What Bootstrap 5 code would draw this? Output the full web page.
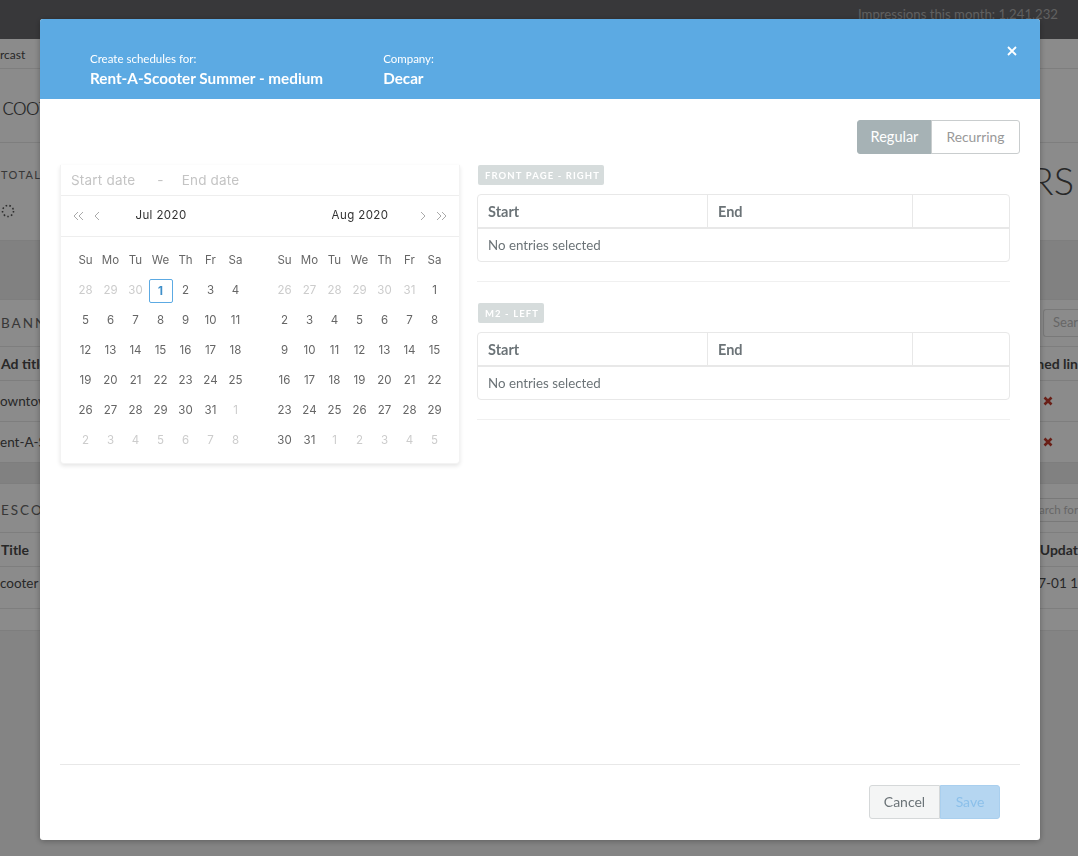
<!DOCTYPE html>
<html lang="en"><head><meta charset="utf-8"><title>Create schedules</title>
<link href="https://cdn.jsdelivr.net/npm/bootstrap@5.3.0/dist/css/bootstrap.min.css" rel="stylesheet">
<style>
html,body{height:856px;overflow:hidden}
body{background:#f0f0f0;font-family:Lato,"Noto Sans","Liberation Sans",sans-serif;color:#6b7377;font-size:14px}
.topbar{height:39px;background:#67676b;color:#b0b0b0;padding-right:20px;font-size:13.2px;padding-bottom:10px}
.bgr{background:#fdfdfd;border-bottom:1px solid #e6e6e6;color:#4a4a4a;font-size:13.5px;overflow:hidden;white-space:nowrap}
.bgr.alt{background:#ebebeb}
.h30{height:30px}.h74{height:74px}.h98{height:98px}.h59{height:59px}.h47{height:47px}.h34{height:34px}.h41{height:41px}.h21{height:21px}.h49{height:49px}.h42{height:42px}.h22{height:22px}
.crumb{font-size:12px;padding-top:2px}
.big{font-size:26px;font-weight:300;padding-left:2px;letter-spacing:-1.5px}
.bigr{font-size:38px;font-weight:300;line-height:1;padding-top:2px}
.caps{font-size:11px;letter-spacing:1.4px;color:#666;padding-left:1px}
.caps2{font-size:13.5px;letter-spacing:2px;color:#666;padding-left:1px}
.pad2{padding-top:4px}
.bold{font-weight:700;font-size:14px;padding-left:1px}
.ghost{color:#bbb;font-size:13px;border:1px solid #ddd;border-right:0;border-radius:3px 0 0 3px;padding:3px 0 3px 9px;width:35px}
.ghost2{color:#bbb;font-size:11.5px;border:1px solid #ddd;border-right:0;padding:2px 0 2px 2px;width:42px}
.chev{margin-left:-4px}
.spin{margin:20px 0 0 1px}
.up8{padding-bottom:8px}
.mr25{margin-right:25px}
.scrim{position:fixed;inset:0;background:rgba(0,0,0,.45)}
.dlg{position:fixed;left:40px;top:19px;width:1000px;height:821px;background:#fff;border:0;border-radius:3px;overflow:hidden;box-shadow:0 1px 6px rgba(0,0,0,.3)}
.dlg-head{height:80px;background:#5caae3;color:#fff;padding:32px 50px 0;position:relative;flex:none}
.lbl{font-size:11.5px;line-height:16px}
.val{font-size:15.25px;font-weight:700;line-height:22px}
.co{margin-left:60px}
.x{position:absolute;right:23px;top:27px}
.dlg-body{padding:21px 20px 0;height:665px}
.seg .btn{font-size:14.5px;height:34px;padding:0;color:#999;border-color:#c9cdce;line-height:32px;border-radius:3px;background:#fff}
.seg .btn.on{width:75px;background:#a6b2b5;color:#fff;border-color:#a6b2b5}
.seg .btn.off2{width:89px;font-size:13.8px}
.cols{margin-top:11px}
.cal{width:400px;height:299px;border-radius:0 0 4px 4px;box-shadow:0 2px 4px rgba(0,0,0,.1);border:1px solid #f3f3f3;border-top:0;font-family:Inter,"Liberation Sans",sans-serif;font-size:11.5px;color:#666}
.cal-in{height:31px;border-bottom:1px solid #eee;padding-left:10px;font-size:13.5px;color:#c4c4c4;letter-spacing:.2px}
.cal-in span:nth-child(2){margin:0 18px 0 22px}
.cal-nav{height:41px;border-bottom:1px solid #eee;color:#333;font-size:11.5px;letter-spacing:.4px}
.half{width:199px;padding:0 11px;position:relative}
.mlabel{position:absolute;left:0;right:0;text-align:center;margin-left:1px}
.mon{width:199.5px;padding:9px 12px 0}
.cal-grid{display:grid;grid-template-columns:repeat(7,25px);grid-auto-rows:30px;align-items:center;justify-items:center}
.off{color:#ccc}
.today{width:24px;height:24px;border:1px solid #5caae3;border-radius:2px;color:#3f8fc9;font-weight:700;text-align:center;line-height:22px}
.tag{background:#d6dcdc;color:#fff;font-size:9.5px;letter-spacing:1.1px;font-weight:700;height:20px;line-height:21px;padding:0 7px;border-radius:2px;display:block;margin-left:1px;white-space:nowrap}
.tag.t1{width:126px}
.tag.t2{width:66px}
.sched{width:533px;margin-right:10px}
.tbl{border:1px solid #e8e8e8;border-radius:4px;margin-top:9px;height:68px;font-size:13.3px}
.tbl-h{height:34px;border-bottom:2px solid #e8e8e8;font-weight:700;font-size:14.5px}
.tbl-c{padding:0 10px;line-height:33px}
.c1{width:230px;border-right:1px solid #e8e8e8}
.c2{width:205px;border-right:1px solid #e8e8e8}
.sep{height:1px;background:#f0f0f0;margin:19px 0 21px}
.foot{margin:0 20px;border-top:1px solid #e8e8e8;padding:20px 20px 0 0}
.foot .btn{height:34px;font-size:14px;padding:0;line-height:32px}
.bc{width:71px;background:#f4f5f5;border-color:#d5d8d9;color:#6b7377;border-radius:3px 0 0 3px}
.bs{width:60px;background:#b5d6f1;border-color:#a9cfee;color:#8cc0ea;border-radius:0 3px 3px 0}
</style></head><body>
<div class="topbar d-flex align-items-center justify-content-end">Impressions this month: 1,241,232</div>
<div class="bgr h30 d-flex align-items-center crumb"><span>rcast</span></div>
<div class="bgr h74 d-flex align-items-center big"><span>coot</span></div>
<div class="bgr h98 d-flex justify-content-between">
  <div class="d-flex flex-column pt-4"><span class="caps">TOTAL</span>
    <svg class="spin" width="14" height="14" viewBox="0 0 14 14"><circle cx="7" cy="7" r="5.5" fill="none" stroke="#555" stroke-width="1.6" stroke-dasharray="1.6 2.2"/></svg></div>
  <div class="d-flex flex-column pt-3 me-1"><span class="bigr">RS</span><svg class="mt-2 chev" width="8" height="10" viewBox="0 0 8 10"><path d="M6 1L2 5l4 4" fill="none" stroke="#666"/></svg></div>
</div>
<div class="bgr alt h59"></div>
<div class="bgr h47 d-flex justify-content-between align-items-center"><span class="caps2">BANN</span><span class="ghost">Sear</span></div>
<div class="bgr h34 d-flex justify-content-between align-items-center bold"><span>Ad title</span><span>shed lin</span></div>
<div class="bgr h41 d-flex justify-content-between align-items-center"><span>owntow</span><svg class="mr25" width="10" height="10" viewBox="0 0 10 10"><path d="M1.5 1.5l7 7M8.5 1.5l-7 7" stroke="#c0392b" stroke-width="2.6"/></svg></div>
<div class="bgr h41 d-flex justify-content-between align-items-center"><span>ent-A-S</span><svg class="mr25" width="10" height="10" viewBox="0 0 10 10"><path d="M1.5 1.5l7 7M8.5 1.5l-7 7" stroke="#c0392b" stroke-width="2.6"/></svg></div>
<div class="bgr alt h21"></div>
<div class="bgr h49 d-flex justify-content-between align-items-center pad2"><span class="caps2">ESCO</span><span class="ghost2">arch for</span></div>
<div class="bgr h34 d-flex justify-content-between align-items-center bold"><span>Title</span><span>Updat</span></div>
<div class="bgr h42 d-flex justify-content-between align-items-center up8"><span>cooter</span><span>07-01 1</span></div>
<div class="bgr h22"></div>
<div class="scrim"></div>
<div class="modal-content dlg">
  <div class="dlg-head d-flex">
    <div><div class="lbl">Create schedules for:</div><div class="val">Rent-A-Scooter Summer - medium</div></div>
    <div class="co"><div class="lbl">Company:</div><div class="val">Decar</div></div>
    <svg class="x" width="10" height="10" viewBox="0 0 10 10"><path d="M1 1l8 8M9 1l-8 8" stroke="#fff" stroke-width="1.8"/></svg>
  </div>
  <div class="dlg-body">
    <div class="d-flex justify-content-end"><div class="btn-group seg"><button class="btn on">Regular</button><button class="btn off2">Recurring</button></div></div>
    <div class="d-flex justify-content-between cols">
      <div class="cal bg-white">
        <div class="cal-in d-flex align-items-center"><span>Start date</span><span>-</span><span>End date</span></div>
        <div class="cal-nav d-flex">
          <div class="half d-flex align-items-center gap-2">
            <span class="mlabel">Jul 2020</span>
            <svg width="13" height="10" viewBox="0 0 13 10"><path d="M6 1L2 5l4 4M11 1L7 5l4 4" fill="none" stroke="#aaa"/></svg>
            <svg width="8" height="10" viewBox="0 0 8 10"><path d="M6 1L2 5l4 4" fill="none" stroke="#aaa"/></svg>
          </div>
          <div class="half d-flex align-items-center justify-content-end gap-2">
            <span class="mlabel">Aug 2020</span>
            <svg width="8" height="10" viewBox="0 0 8 10"><path d="M2 1l4 4-4 4" fill="none" stroke="#aaa"/></svg>
            <svg width="13" height="10" viewBox="0 0 13 10"><path d="M2 1l4 4-4 4M7 1l4 4-4 4" fill="none" stroke="#aaa"/></svg>
          </div>
        </div>
        <div class="d-flex" id="mons"></div>
      </div>
      <div class="sched">
        <span class="tag t1">FRONT PAGE - RIGHT</span>
        <div class="tbl"><div class="tbl-h d-flex"><div class="tbl-c c1">Start</div><div class="tbl-c c2">End</div></div><div class="tbl-c">No entries selected</div></div>
        <div class="sep"></div>
        <span class="tag t2">M2 - LEFT</span>
        <div class="tbl"><div class="tbl-h d-flex"><div class="tbl-c c1">Start</div><div class="tbl-c c2">End</div></div><div class="tbl-c">No entries selected</div></div>
        <div class="sep"></div>
      </div>
    </div>
  </div>
  <div class="foot d-flex justify-content-end"><button class="btn bc">Cancel</button><button class="btn bs">Save</button></div>
</div>
<script>
const heads=['Su','Mo','Tu','We','Th','Fr','Sa'];
function mon(cells){return '<div class="mon"><div class="cal-grid">'+heads.map(h=>'<span>'+h+'</span>').join('')+cells.join('')+'</div></div>';}
function r(a,b,o){let s=[];for(let i=a;i<=b;i++)s.push('<span'+(o?' class="off"':'')+'>'+i+'</span>');return s;}
let jul=[...r(28,30,1),'<span class="today">1</span>',...r(2,31),...r(1,8,1)];
let aug=[...r(26,31,1),...r(1,31),...r(1,5,1)];
document.getElementById('mons').innerHTML=mon(jul)+mon(aug);
</script>
<script src="https://cdn.jsdelivr.net/npm/bootstrap@5.3.0/dist/js/bootstrap.bundle.min.js"></script>
</body></html>
